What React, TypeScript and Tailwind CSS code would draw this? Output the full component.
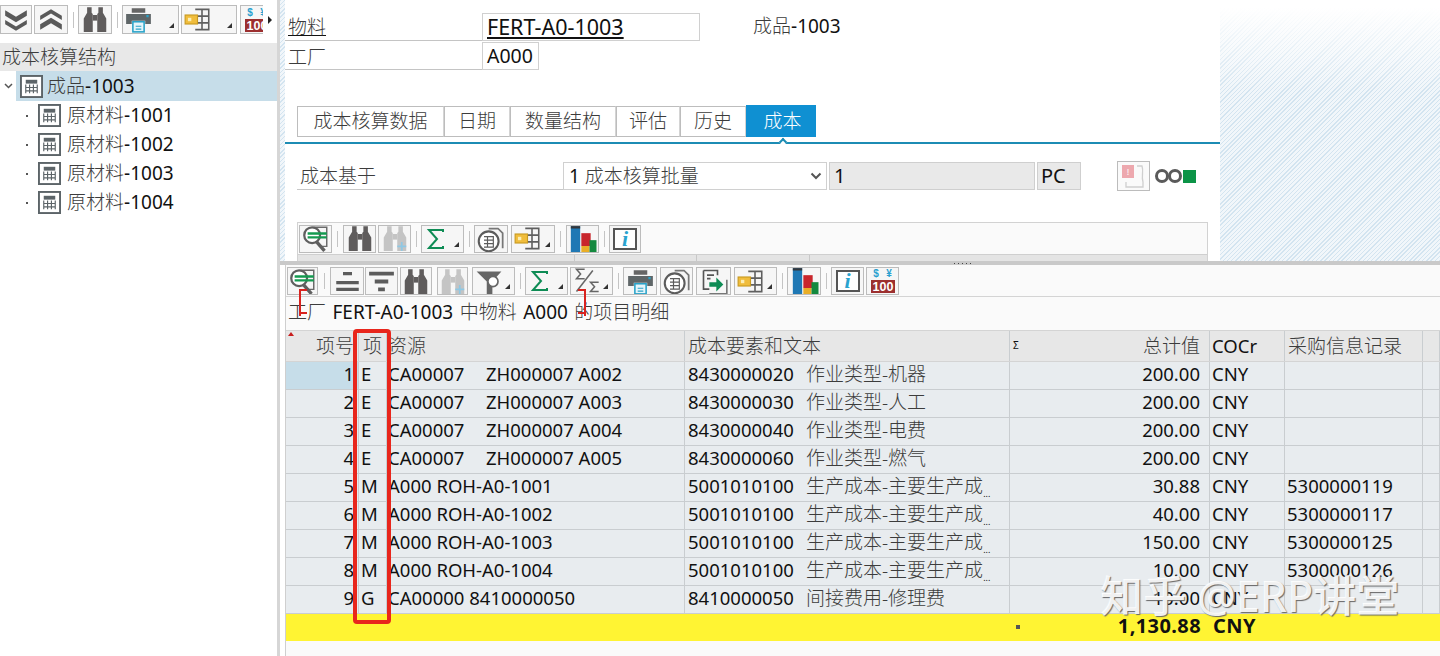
import type { ReactNode } from "react"

const gridCols = "grid grid-cols-[73px_28px_298px_325px_200px_75px_138px_1fr]"
const hatch =
  "bg-[repeating-linear-gradient(135deg,#d3e4f0_0,#d3e4f0_1px,#f1f6fa_1px,#f1f6fa_3px)]"

const rows = [
  { no: 1, type: "E", res: ["CA00007", "ZH000007 A002"], acct: "8430000020", text: "作业类型-机器", total: "200.00", info: "" },
  { no: 2, type: "E", res: ["CA00007", "ZH000007 A003"], acct: "8430000030", text: "作业类型-人工", total: "200.00", info: "" },
  { no: 3, type: "E", res: ["CA00007", "ZH000007 A004"], acct: "8430000040", text: "作业类型-电费", total: "200.00", info: "" },
  { no: 4, type: "E", res: ["CA00007", "ZH000007 A005"], acct: "8430000060", text: "作业类型-燃气", total: "200.00", info: "" },
  { no: 5, type: "M", res: ["A000 ROH-A0-1001"], acct: "5001010100", text: "生产成本-主要生产成", more: true, total: "30.88", info: "5300000119" },
  { no: 6, type: "M", res: ["A000 ROH-A0-1002"], acct: "5001010100", text: "生产成本-主要生产成", more: true, total: "40.00", info: "5300000117" },
  { no: 7, type: "M", res: ["A000 ROH-A0-1003"], acct: "5001010100", text: "生产成本-主要生产成", more: true, total: "150.00", info: "5300000125" },
  { no: 8, type: "M", res: ["A000 ROH-A0-1004"], acct: "5001010100", text: "生产成本-主要生产成", more: true, total: "10.00", info: "5300000126" },
  { no: 9, type: "G", res: ["CA00000 8410000050"], acct: "8410000050", text: "间接费用-修理费", total: "10.00", info: "" },
]

function Cn({ children }: { children: ReactNode }) {
  return <span className="text-[19px] font-light text-[#3c3c3c]">{children}</span>
}

function Svg({ children, w = 24, h = 24 }: { children: ReactNode; w?: number; h?: number }) {
  return (
    <svg width={w} height={h} viewBox="0 0 24 24" fill="none">
      {children}
    </svg>
  )
}

const ChevDown = () => (
  <Svg w={28} h={26}>
    <path d="M2 3l10 6 10-6v5l-10 6L2 8zM2 12l10 6 10-6v4l-10 6-10-6z" fill="#5a5a5a" />
  </Svg>
)
const ChevUp = () => (
  <Svg w={28} h={26}>
    <path d="M2 21l10-6 10 6v-5L12 10 2 16zM2 12l10-6 10 6V8L12 2 2 8z" fill="#5a5a5a" />
  </Svg>
)
const Binoculars = ({ light }: { light?: boolean }) => {
  const c = light ? "#c4c4c4" : "#5f5c5c"
  return (
    <Svg w={28} h={27}>
      <path d="M5 1h4v5l1 1v16H2V11l3-5zM15 1h4v5l3 5v12h-8V7l1-1z" fill={c} />
      <rect x="10" y="8" width="4" height="5" fill={c} />
      {light && <path d="M18 15v8M14 19h8" stroke="#8fc8e4" strokeWidth="1.500" />}
    </Svg>
  )
}
const Printer = () => (
  <Svg w={27} h={27}>
    <rect x="6" y="2" width="12" height="4" fill="#666" />
    <path d="M1 7h22v9h-5v-3H6v3H1z" fill="#5f6668" />
    <rect x="19" y="8" width="2" height="2" fill="#2aa3c9" />
    <rect x="7" y="14" width="10" height="9" fill="#e6f5fa" stroke="#2aa3c9" strokeWidth="1.400" />
    <path d="M9.500 18h5M9.500 20.500h5" stroke="#2aa3c9" />
  </Svg>
)
const Layout = () => (
  <Svg w={27} h={27}>
    <path d="M10 3h12v18H10M16 3v18M10 9h12M10 15h12" stroke="#5f5f5f" strokeWidth="1.400" />
    <rect x="1" y="8" width="11" height="8" fill="#f0bd3c" stroke="#c99a20" />
    <rect x="3.500" y="10.500" width="3" height="3" fill="#fbeeb5" />
  </Svg>
)
const Money = () => (
  <svg width="26" height="26" viewBox="0 0 26 26">
    <text x="6" y="9" fontSize="10" fontWeight="700" fill="#29a0cf" fontFamily="Liberation Sans" textAnchor="middle">$</text>
    <text x="19" y="9" fontSize="10" fontWeight="700" fill="#29a0cf" fontFamily="Liberation Sans" textAnchor="middle">¥</text>
    <rect x="1" y="12" width="24" height="13" fill="#9c2f2f" />
    <text x="13" y="23" fontSize="12.500" fontWeight="700" fill="#fff" fontFamily="Liberation Sans" textAnchor="middle">100</text>
  </svg>
)
const SelectIcon = () => (
  <Svg w={27} h={27}>
    <path d="M10 2h12v17h-7" stroke="#6a6a6a" strokeWidth="1.300" />
    <circle cx="9" cy="9" r="7" stroke="#5f5f5f" strokeWidth="2" fill="#fff" />
    <path d="M5 7.500h17M5 11h17" stroke="#149a50" strokeWidth="2.200" />
    <path d="M13 15l7 8" stroke="#5f5f5f" strokeWidth="3" />
  </Svg>
)
const Center = () => (
  <Svg w={27} h={27}>
    <path d="M8 5h8M2 13h20M2 19h20" stroke="#5c5c5c" strokeWidth="3" />
  </Svg>
)
const Funnel = () => (
  <Svg w={28} h={27}>
    <path d="M1 3h22L15 12v11h-5V12z" fill="#666" />
    <circle cx="15.500" cy="12" r="4.500" fill="#fff" stroke="#666" strokeWidth="1.500" />
  </Svg>
)
const Sigma = () => (
  <Svg w={24} h={24}>
    <path d="M19 5V3H5l8 9-8 9h14v-2" stroke="#0e8c55" strokeWidth="2" />
  </Svg>
)
const SigmaFrac = () => (
  <Svg w={28} h={28}>
    <path d="M10 2H3l3.500 4L3 10h7M22 13h-7l3.500 4-3.500 4h7" stroke="#666" strokeWidth="1.300" />
    <path d="M3 21L17 3" stroke="#666" strokeWidth="1.300" />
  </Svg>
)
const Chart = () => (
  <Svg w={29} h={28}>
    <rect x="2" y="1" width="8" height="23" fill="#1f78b4" />
    <rect x="2" y="1" width="8" height="2" fill="#33363a" />
    <rect x="11" y="7" width="8" height="11" fill="#c8262c" />
    <rect x="11" y="18" width="7" height="6" fill="#e9ae27" />
    <rect x="18" y="13" width="6" height="11" fill="#14893f" />
  </Svg>
)
const Info = () => (
  <div className="flex h-[22px] w-[24px] items-center justify-center border-2 border-[#555] bg-white font-['Liberation_Serif',serif] text-[22px] leading-none font-bold text-[#2aa3cf] italic">
    i
  </div>
)
const Clip = () => (
  <Svg w={28} h={28}>
    <path d="M10 3h8l4 4v13" stroke="#777" strokeWidth="1.500" />
    <circle cx="10" cy="14" r="8.500" stroke="#5c5c5c" strokeWidth="1.800" fill="#fff" />
    <path d="M6 10h8v9H6M6 13h8M6 16h8M9 10v9" stroke="#5c5c5c" />
  </Svg>
)
const Export = () => (
  <Svg w={28} h={28}>
    <path d="M3 3h12v4M3 3v16h5M6 7h6M6 10h3" stroke="#555" strokeWidth="1.400" />
    <path d="M8 23h15V11" stroke="#777" strokeWidth="1.400" />
    <path d="M8 13h6V9l6 6-6 6v-4H8z" fill="#0e8c55" />
  </Svg>
)

function Btn({ w, h = "h-[28px]", drop, children }: { w: string; h?: string; drop?: boolean; children: ReactNode }) {
  return (
    <div
      className={`relative flex shrink-0 items-center overflow-hidden border border-[#bcbcbc] bg-[#f6f6f6] ${h} ${w} ${
        drop ? "justify-start pl-[2px]" : "justify-center"
      }`}
    >
      {children}
      {drop && (
        <span className="absolute right-[4px] bottom-[5px] h-0 w-0 border-b-[5px] border-l-[5px] border-b-[#333] border-l-transparent" />
      )}
    </div>
  )
}

// fixed-width gap with the little divider line in the middle
function Sep({ w = "w-[10px]" }: { w?: string }) {
  return (
    <div className={`flex h-[28px] shrink-0 items-center justify-center ${w}`}>
      <div className="h-[16px] w-px bg-[#c4c4c4]" />
    </div>
  )
}

function LeftTree() {
  const items = ["1001", "1002", "1003", "1004"]
  const Building = () => (
    <Svg w={23} h={23}>
      <rect x="1" y="1" width="22" height="22" fill="#fff" stroke="#5c6468" strokeWidth="2" />
      <rect x="6" y="5" width="12" height="4" fill="#5c6468" />
      <path d="M6 10v9M10 10v9M14 10v9M18 10v9M6 13h12M6 16.500h12" stroke="#5c6468" strokeWidth="1.200" />
    </Svg>
  )
  return (
    <aside className="w-[277px] shrink-0 bg-white pt-[5px]">
      <div className="flex h-[29px] items-center overflow-hidden">
        <Btn w="w-[32px]" h="h-[29px]"><ChevDown /></Btn>
        <div className="w-[2px] shrink-0" />
        <Btn w="w-[34px]" h="h-[29px]"><ChevUp /></Btn>
        <Sep />
        <Btn w="w-[34px]" h="h-[29px]"><Binoculars /></Btn>
        <Sep />
        <Btn w="w-[57px]" h="h-[29px]" drop><Printer /></Btn>
        <div className="w-[2px] shrink-0" />
        <Btn w="w-[56px]" h="h-[29px]" drop><Layout /></Btn>
        <div className="w-[3px] shrink-0" />
        <div className="w-[23px] shrink-0 overflow-hidden"><Btn w="w-[33px]" h="h-[29px]"><Money /></Btn></div>
        <span className="ml-[5px] h-0 w-0 border-y-[4px] border-l-[4px] border-y-transparent border-l-[#222]" />
      </div>
      <div className="mt-[9px] h-[28px] bg-[#e8e8e8] pl-[2px] text-[19px] leading-[29px]">
        <Cn>成本核算结构</Cn>
      </div>
      <div className="flex h-[30px]">
        <div className="flex w-[16px] items-center justify-center">
          <svg width="9" height="6" viewBox="0 0 9 6"><path d="M1 1l3.500 3.500L8 1" stroke="#555" strokeWidth="1.500" fill="none" /></svg>
        </div>
        <div className="flex flex-1 items-center gap-[4px] bg-[#c6dde9] pl-[4px] text-[19px] leading-[30px]">
          <Building />
          <span><Cn>成品</Cn>-1003</span>
        </div>
      </div>
      {items.map((n) => (
        <div key={n} className="flex h-[29px] items-center text-[19px]">
          <span className="ml-[26px] h-[2px] w-[2px] bg-[#555]" />
          <span className="ml-[10px] flex"><Building /></span>
          <span className="ml-[6px]"><Cn>原材料</Cn>-{n}</span>
        </div>
      ))}
    </aside>
  )
}

function HeaderForm() {
  return (
    <div className="flex-1 bg-white">
      <div className="box-content flex h-[28px] items-end pt-[13px]">
        <div className="h-[28px] w-[197px] border-b border-[#c4c4c4] pl-[3px] text-[19px] leading-[29px]">
          <span className="underline"><Cn>物料</Cn></span>
        </div>
        <div className="h-[28px] w-[218px] border border-[#d0d0d0] pl-[4px] text-[21.500px] leading-[26px] underline">
          FERT-A0-1003
        </div>
        <div className="ml-[53px] h-[28px] text-[19px] leading-[27px]"><Cn>成品</Cn>-1003</div>
      </div>
      <div className="mt-[1px] flex h-[28px]">
        <div className="h-[28px] w-[197px] border-b border-[#c4c4c4] pl-[3px] text-[19px] leading-[30px]"><Cn>工厂</Cn></div>
        <div className="h-[28px] w-[57px] border border-[#d0d0d0] pl-[4px] text-[19.500px] leading-[26px]">A000</div>
      </div>
      <div className="mt-[35px] flex h-[32px] items-end pl-[12px] text-[19px]">
        {[
          ["成本核算数据", "w-[147px]"],
          ["日期", "w-[66px]"],
          ["数量结构", "w-[106px]"],
          ["评估", "w-[64px]"],
          ["历史", "w-[66px]"],
        ].map(([t, w]) => (
          <div key={t} className={`h-[31px] border border-y-[#bdbdbd] border-r-[#d4d4d4] border-l-[#bdbdbd] bg-white text-center leading-[29px] ${w}`}>
            <Cn>{t}</Cn>
          </div>
        ))}
        <div className="h-[32px] w-[70px] bg-[#0f90d2] pl-[3px] text-center leading-[32px] font-light text-white">成本</div>
      </div>
      <div className="relative mt-[5px] h-[2px] bg-[#1c8cb4]">
        <span className="absolute -top-[3px] left-[495px] h-[6px] w-[6px] rotate-45 border-t-2 border-l-2 border-[#1c8cb4] bg-white" />
      </div>
      <div className="mt-[18px] flex h-[28px] pl-[12px] text-[19px]">
        <div className="w-[266px] border-b border-[#c8c8c8] pl-[3px] leading-[29px]"><Cn>成本基于</Cn></div>
        <div className="flex w-[264px] items-center justify-between border border-[#d0d0d0] pr-[4px] pl-[5px] text-[19px]">
          <span>1 <Cn>成本核算批量</Cn></span>
          <svg width="12" height="8" viewBox="0 0 12 8"><path d="M1.500 1.500L6 6l4.500-4.500" stroke="#555" strokeWidth="2" fill="none" /></svg>
        </div>
        <div className="ml-[2px] w-[206px] border border-[#cfcfcf] bg-[#e9e9e9] pl-[4px] text-[20px] leading-[25px]">1</div>
        <div className="ml-[2px] w-[44px] border border-[#cfcfcf] bg-[#e9e9e9] pl-[3px] text-[20px] leading-[25px]">PC</div>
        <div className="ml-[36px] flex h-[30px] w-[33px] -translate-y-px items-start border border-[#bcbcbc] bg-[#fafafa] p-[3px]">
          <svg width="25" height="24" viewBox="0 0 25 24">
            <path d="M16 1h5c2 6-1 10 1 16v5H5v-5" stroke="#cfcfcf" strokeWidth="1.300" fill="none" />
            <rect x="1" y="0" width="12" height="13" fill="#eda8ae" />
            <text x="7" y="10" fontSize="9" fill="#fff" textAnchor="middle" fontFamily="Liberation Sans">!</text>
          </svg>
        </div>
        <div className="ml-[5px] flex items-center">
          <span className="h-[14px] w-[14px] rounded-full border-[3px] border-[#5a5a5a]" />
          <span className="-ml-px h-[14px] w-[14px] rounded-full border-[3px] border-[#5a5a5a]" />
          <span className="ml-px h-[13px] w-[13px] bg-[#0c9447]" />
        </div>
      </div>
      <div className="mt-[32px] ml-[12px] h-[40px] w-[911px] overflow-hidden border border-[#d2d2d2] bg-[#fafafa]">
        <div className="flex h-[31px] items-center pl-[1px]">
          <Btn w="w-[33px]"><SelectIcon /></Btn>
          <Sep w="w-[11px]" />
          <Btn w="w-[33px]"><Binoculars /></Btn>
          <div className="w-[2px] shrink-0" />
          <Btn w="w-[33px]"><Binoculars light /></Btn>
          <Sep />
          <Btn w="w-[43px]" drop><Sigma /></Btn>
          <Sep />
          <Btn w="w-[34px]"><Clip /></Btn>
          <div className="w-[3px] shrink-0" />
          <Btn w="w-[44px]" drop><Layout /></Btn>
          <Sep w="w-[11px]" />
          <Btn w="w-[33px]"><Chart /></Btn>
          <Sep />
          <Btn w="w-[32px]"><Info /></Btn>
        </div>
        <div className="flex h-[9px] border-t border-[#cfcfcf] bg-[#e4e4e4]">
          <div className="w-[277px] border-r border-[#c8c8c8]" />
          <div className="w-[122px] border-r border-[#c8c8c8]" />
          <div className="w-[113px] border-r border-[#c8c8c8]" />
        </div>
      </div>
    </div>
  )
}

function BottomToolbar() {
  return (
    <div className="flex h-[32px] items-start border-b border-[#d4d4d4] bg-[#fafafa] pt-[2px] pl-[1px]">
      <Btn w="w-[31px]"><SelectIcon /></Btn>
      <Sep w="w-[12px]" />
      <Btn w="w-[34px]"><Center /></Btn>
      <div className="w-px shrink-0" />
      <Btn w="w-[33px]">
        <Svg w={27} h={27}><path d="M1 5h22M6 12h12M9 19h6" stroke="#5c5c5c" strokeWidth="3.500" /></Svg>
      </Btn>
      <div className="w-[2px] shrink-0" />
      <Btn w="w-[32px]"><Binoculars /></Btn>
      <div className="w-[5px] shrink-0" />
      <Btn w="w-[31px]"><Binoculars light /></Btn>
      <div className="w-[4px] shrink-0" />
      <Btn w="w-[43px]" drop><Funnel /></Btn>
      <Sep />
      <Btn w="w-[43px]" drop><Sigma /></Btn>
      <div className="w-[2px] shrink-0" />
      <Btn w="w-[43px]" drop><SigmaFrac /></Btn>
      <Sep />
      <Btn w="w-[34px]"><Printer /></Btn>
      <div className="w-[3px] shrink-0" />
      <Btn w="w-[33px]"><Clip /></Btn>
      <div className="w-[3px] shrink-0" />
      <Btn w="w-[35px]"><Export /></Btn>
      <div className="w-[3px] shrink-0" />
      <Btn w="w-[43px]" drop><Layout /></Btn>
      <Sep />
      <Btn w="w-[34px]"><Chart /></Btn>
      <Sep />
      <Btn w="w-[33px]"><Info /></Btn>
      <div className="w-[2px] shrink-0" />
      <Btn w="w-[33px]"><Money /></Btn>
    </div>
  )
}

function CostTable() {
  const cell = "overflow-hidden whitespace-nowrap border-r border-[#c9cdd0]"
  return (
    <div className="relative text-[18.500px]">
      <div className={`${gridCols} h-[32px] border-y border-[#d4d4d4] bg-[#e7e7e7] leading-[29px]`}>
        <div className={`${cell} pr-[4px] text-right`}><Cn>项号</Cn></div>
        <div className={`${cell} pl-[4px]`}><Cn>项</Cn></div>
        <div className={`${cell} pl-[1px]`}><Cn>资源</Cn></div>
        <div className={`${cell} pl-[3px]`}><Cn>成本要素和文本</Cn></div>
        <div className={`${cell} relative pr-[9px] text-right`}>
          <span className="absolute top-0 left-[3px] text-[10px]">Σ</span>
          <Cn>总计值</Cn>
        </div>
        <div className={`${cell} pl-[2px]`}>COCr</div>
        <div className={`${cell} pl-[3px]`}><Cn>采购信息记录</Cn></div>
        <div className={cell} />
      </div>
      {rows.map((r) => (
        <div key={r.no} className={`${gridCols} h-[28px] border-b border-[#c9cdd0] bg-[#e8ecef] leading-[24px]`}>
          <div className={`${cell} pr-[4px] text-right ${r.no === 1 ? "bg-[#c6dde9]" : ""}`}>{r.no}</div>
          <div className={`${cell} pl-[2px]`}>{r.type}</div>
          <div className={`${cell} flex pl-[1px]`}>
            {r.res.length > 1 && <span className="w-[98px]">{r.res[0]}</span>}
            <span>{r.res[r.res.length - 1]}</span>
          </div>
          <div className={`${cell} flex pl-[3px]`}>
            <span className="w-[118px]">{r.acct}</span>
            <Cn>{r.text}</Cn>
            {r.more && <span className="self-end text-[9px] leading-[14px]">...</span>}
          </div>
          <div className={`${cell} pr-[9px] text-right`}>{r.total}</div>
          <div className={`${cell} pl-[2px]`}>CNY</div>
          <div className={`${cell} pl-[2px]`}>{r.info}</div>
          <div className={cell} />
        </div>
      ))}
      <div className={`${gridCols} h-[27px] bg-[#fff433] text-[20px] leading-[24px] font-bold tracking-[0.4px]`}>
        <div className="col-span-4" />
        <div className="relative pr-[9px] text-right">
          <span className="absolute top-[11px] left-[6px] h-[4px] w-[4px] bg-[#555]" />
          1,130.88
        </div>
        <div className="pl-[3px]">CNY</div>
      </div>
      <span className="absolute top-[2px] left-[2px] h-0 w-0 border-x-[3px] border-b-[4px] border-x-transparent border-b-[#c81e1e]" />
      <div className="absolute -top-px left-[67px] h-[295px] w-[38px] rounded-[4px] border-[4px] border-[#e8261c]" />
    </div>
  )
}

export default function App() {
  return (
    <div className="relative flex h-[656px] w-[1440px] overflow-hidden bg-white font-['Noto_Sans','Noto_Sans_CJK_SC',sans-serif] text-[#111]">
      <LeftTree />
      <div className="w-[3px] shrink-0 bg-[#d6d6d6]" />
      <div className="flex min-w-0 flex-1 flex-col">
        <div className="flex h-[261px] shrink-0">
          <div className={`w-[5px] shrink-0 ${hatch}`} />
          <HeaderForm />
          <div className="w-[220px] shrink-0 bg-[linear-gradient(to_bottom,#ffffff_3%,#ffffff00_35%),repeating-linear-gradient(135deg,#d3e4f0_0,#d3e4f0_1px,#f1f6fa_1px,#f1f6fa_3px)]" />
        </div>
        <div className="flex h-[4px] shrink-0 items-center justify-center bg-[#c9c9c9] pl-[205px] text-[0px]">
          <span className="h-px w-[17px] bg-[repeating-linear-gradient(90deg,#444_0,#444_1px,transparent_1px,transparent_4px)]" />
        </div>
        <div className="flex min-h-0 flex-1">
          <div className="w-[6px] shrink-0 border-r border-[#cfcfcf] bg-white" />
          <div className="relative min-w-0 flex-1 bg-[#fafafa]">
            <BottomToolbar />
            <div className="h-[33px] pl-[2px] text-[19px] leading-[31px] [word-spacing:1.500px]">
              <Cn>工厂</Cn> FERT-A0-1003 <Cn>中物料</Cn> A000 <Cn>的项目明细</Cn>
            </div>
            <CostTable />
            <span className="absolute top-[24px] left-[13px] h-[27px] w-[8px] border-t-2 border-l-2 border-[#d8231f]" />
            <span className="absolute top-[47px] left-[13px] h-[2px] w-[8px] bg-[#d8231f]" />
            <span className="absolute top-[24px] left-[292px] h-[27px] w-[8px] border-t-2 border-r-2 border-[#d8231f]" />
            <span className="absolute top-[47px] left-[292px] h-[2px] w-[8px] bg-[#d8231f]" />
          </div>
        </div>
      </div>
      <div className="absolute top-[569px] left-[1100px] text-[43px] leading-[54px] font-medium whitespace-nowrap text-white/90 [text-shadow:1px_1px_1px_#666666]">
        知乎 @ERP讲堂
      </div>
    </div>
  )
}
